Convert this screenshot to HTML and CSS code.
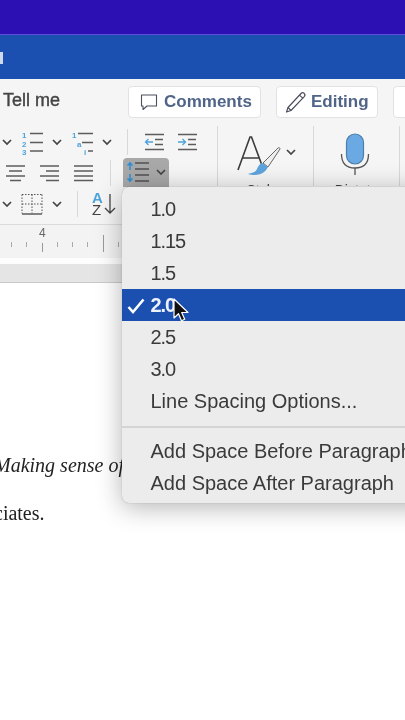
FILE: index.html
```html
<!DOCTYPE html>
<html lang="en">
<head>
<meta charset="utf-8">
<title>Line spacing menu</title>
<link rel="stylesheet" href="styles.css">
</head>
<body>
<div class="app">
  <div class="os-bar"></div>
  <div class="title-bar"><span class="title-stub"></span></div>
  <div class="ribbon">
    <div class="ribbon-head">
      <span class="tell">Tell me</span>
      <button class="pill pill-comments">
        <svg class="pill-icon" viewBox="0 0 20 20" width="20" height="20"><path d="M2.5 3h15v11H8l-4 3.5V14H2.5z" fill="#fff" stroke="#4a4f5c" stroke-width="1.1" stroke-linejoin="round"/></svg>
        <span>Comments</span>
      </button>
      <button class="pill pill-editing">
        <svg class="pill-icon" viewBox="0 0 24 24" width="24" height="24"><path d="M4 17.5 17 3.5c1-1 2.3-1 3.2-.1s.9 2.200 0 3.200L7 20.500l-4.500 1.500z" fill="none" stroke="#4a4f5c" stroke-width="1.200" stroke-linejoin="round"/><path d="M15.500 5.200l3.500 3.200M4 17.500l3 3" fill="none" stroke="#4a4f5c" stroke-width="1.100"/></svg>
        <span>Editing</span>
      </button>
      <button class="pill pill-next"></button>
    </div>
    <div class="tools">
      <div class="para">
        <div class="row row-1">
          <svg class="chev" viewBox="0 0 10 6" width="10" height="6"><path d="M1 1l4 4 4-4"/></svg>
          <svg class="ico" viewBox="0 0 22 24" width="22" height="24"><g class="num-text"><text x="2" y="8">1</text><text x="2" y="16.500">2</text><text x="2" y="25">3</text></g><path class="ln" d="M10 3.500h13M10 12.500h13M10 21h13"/></svg>
          <svg class="chev" viewBox="0 0 10 6" width="10" height="6"><path d="M1 1l4 4 4-4"/></svg>
          <svg class="ico" viewBox="0 0 22 24" width="22" height="24"><g class="num-text"><text x="1" y="8">1</text><text x="6" y="16.500">a</text><text x="13" y="25">i</text></g><path class="ln" d="M7 3.500h15M11 12.500h11M17 21h5"/></svg>
          <svg class="chev" viewBox="0 0 10 6" width="10" height="6"><path d="M1 1l4 4 4-4"/></svg>
          <span class="sep"></span>
          <svg class="ico" viewBox="0 0 20 18" width="20" height="18"><path class="ln" d="M1 1.500h19M11 6.500h8M11 11.500h8M1 16.500h19"/><path class="num" d="M9 9H1.500M4.500 6 1.500 9l3 3"/></svg>
          <svg class="ico" viewBox="0 0 20 18" width="20" height="18"><path class="ln" d="M1 1.500h19M11 6.500h8M11 11.500h8M1 16.500h19"/><path class="num" d="M1 9h7.500M5.500 6l3 3-3 3"/></svg>
        </div>
        <div class="row row-2">
          <svg class="ico" viewBox="0 0 20 18" width="20" height="18"><path class="ln" d="M1 2h19M4 7h13M1 12h19M5 16.500h11"/></svg>
          <svg class="ico" viewBox="0 0 20 18" width="20" height="18"><path class="ln" d="M1 2h19M7 7h13M1 12h19M7 16.500h13"/></svg>
          <svg class="ico" viewBox="0 0 20 18" width="20" height="18"><path class="ln" d="M1 2h19M1 7h19M1 12h19M1 16.500h19"/></svg>
          <span class="sep sep-2"></span>
          <div class="spacing-btn">
            <svg class="ico" viewBox="0 0 24 22" width="24" height="22"><path class="num num-strong" d="M4 9V2M1.500 4.500 4 2l2.500 2.500M4 13v7M1.500 17.500 4 20l2.500-2.500"/><path class="ln ln-dark" d="M9 2h14M9 8h14M9 14h14M9 20h14"/></svg>
            <svg class="chev" viewBox="0 0 10 6" width="10" height="6"><path d="M1 1l4 4 4-4"/></svg>
          </div>
        </div>
        <div class="row row-3">
          <svg class="chev" viewBox="0 0 10 6" width="10" height="6"><path d="M1 1l4 4 4-4"/></svg>
          <svg class="ico" viewBox="0 0 22 22" width="22" height="22"><path d="M1 1.500h20M1 11h20M11 1.500v19M1 1.500v19M21 1.500v19" fill="none" stroke="#555" stroke-width="1" stroke-dasharray="1.500 1.500"/><path class="ln" d="M1 21h20"/></svg>
          <svg class="chev" viewBox="0 0 10 6" width="10" height="6"><path d="M1 1l4 4 4-4"/></svg>
          <span class="sep sep-3"></span>
          <span class="sort"><span class="sort-a">A</span><span class="sort-z">Z</span></span>
          <svg class="sort-arrow" viewBox="0 0 12 22" width="12" height="22"><path d="M6 1v19M1 15l5 5 5-5" fill="none" stroke="#444" stroke-width="1.300"/></svg>
        </div>
      </div>
      <div class="big-tool tool-style">
        <div class="big-icons">
          <svg viewBox="0 0 46 46" width="46" height="46"><path d="M2 40 14 7h1.500L27 38M6.500 28h17" fill="none" stroke="#3c3c3c" stroke-width="1.600"/><path d="M27 33 42 18c1-1 2 0 2 1L32 37z" fill="#efefef" stroke="#666" stroke-width="1"/><path d="M26 33c-3 1-4 4-5 6-1 3-5 4-9 5 5 2 13 1 16-2 3-2 3-4 4-5z" fill="#5ea3dd"/></svg>
          <svg class="chev" viewBox="0 0 10 6" width="10" height="6"><path d="M1 1l4 4 4-4"/></svg>
        </div>
        <span class="big-label">Styles</span>
      </div>
      <div class="big-tool tool-dictate">
        <svg class="mic" viewBox="0 0 32 46" width="32" height="46"><rect x="7.500" y="4" width="17" height="30" rx="8.500" fill="#6aa9e4" stroke="#4b7ea8" stroke-width="1.200"/><path d="M2.500 24c0 10 5 14 13.500 14s13.500-4 13.500-14M16 38v7" fill="none" stroke="#555" stroke-width="1.300"/></svg>
        <span class="big-label">Dictate</span>
      </div>
    </div>
  </div>
  <div class="ruler">
    <span class="ruler-num">4</span>
    <div class="ticks"><i></i><i></i><i class="mid"></i><i></i><i></i><i></i><i class="tall"></i><i></i></div>
  </div>
  <div class="ruler-gap"></div>
  <div class="band"></div>
  <div class="doc">
    <p class="doc-line doc-italic">Making sense of</p>
    <p class="doc-line doc-plain">ciates.</p>
  </div>
</div>
<div class="menu">
  <div class="item item-num">1.0</div>
  <div class="item item-num">1.15</div>
  <div class="item item-num">1.5</div>
  <div class="item item-num active"><svg class="check" viewBox="0 0 18 16" width="18" height="16"><path d="M1.500 9l4.500 5L16.500 1.500" fill="none" stroke="#fff" stroke-width="2.600"/></svg>2.0</div>
  <div class="item item-num">2.5</div>
  <div class="item item-num">3.0</div>
  <div class="item">Line Spacing Options...</div>
  <div class="divider"></div>
  <div class="item">Add Space Before Paragraph</div>
  <div class="item">Add Space After Paragraph</div>
</div>
<svg class="cursor" viewBox="0 0 16 25" width="16" height="25"><path d="M1 1v19l4.500-4.300 3 7 3.200-1.400-3-6.800H15z" fill="#111" stroke="#fff" stroke-width="1.200" stroke-linejoin="round"/></svg>
</body>
</html>
```
FILE: styles.css
```css
* { box-sizing: border-box; }
html, body { margin: 0; padding: 0; width: 405px; height: 720px; overflow: hidden; background: #fff; }
body { position: relative; font-family: "Liberation Sans", Arial, sans-serif; filter: blur(0.4px); }

.app { width: 405px; height: 720px; display: flex; flex-direction: column; overflow: hidden; }
.os-bar { height: 35px; background: #2d10b4; border-bottom: 1px solid #5a4fd6; flex: none; }
.title-bar { height: 44px; background: #1b50b0; flex: none; display: flex; align-items: center; }
.title-stub { width: 3px; height: 12px; background: #cfd9ee; margin-top: 1px; }

.ribbon { height: 146px; background: #f5f5f5; flex: none; overflow: hidden; border-bottom: 1px solid #dcdcdc; }
.ribbon-head { height: 47px; display: flex; align-items: flex-start; padding-top: 7px; white-space: nowrap; }
.tell { font-size: 18px; color: #444; margin: 4px 0 0 3px; width: 125px; flex: none; -webkit-text-stroke: .4px #444; }
.pill { height: 32px; background: #fff; border: 1px solid #e2e2e2; border-radius: 4px; display: flex; align-items: center; padding: 0; font: 700 17px "Liberation Sans", Arial, sans-serif; color: #4f6488; flex: none; }
.pill-comments { width: 133px; padding-left: 10px; gap: 5px; }
.pill-editing { width: 102px; margin-left: 15px; padding-left: 7px; gap: 3px; }
.pill-next { width: 40px; margin-left: 15px; }
.pill-icon { flex: none; }

.tools { display: flex; height: 99px; }
.para { width: 218px; flex: none; border-right: 1px solid #d8d8d8; height: 60px; overflow: visible; }
.row { display: flex; align-items: center; width: 217px; padding-left: 2px; }
.row-1 { height: 31px; }
.row-2 { height: 31px; padding-left: 5px; }
.row-3 { height: 32px; }
.chev { flex: none; fill: none; stroke: #444; stroke-width: 1.700; }
.ico { flex: none; }
.ln { fill: none; stroke: #5c5c5c; stroke-width: 1.500; }
.ln-dark { stroke: #505050; }
.num { fill: none; stroke: #4ea3dc; stroke-width: 1.300; }
.num-strong { stroke: #2f8fd6; stroke-width: 1.600; }
.num-text { font: 700 8px "Liberation Sans", Arial, sans-serif; fill: #4ea3dc; }
.row-1 svg { overflow: visible; }
.row-1 .ico:nth-of-type(2) { margin-left: 8px; }
.row-1 .chev:nth-of-type(3) { margin-left: 10px; }
.row-1 .ico:nth-of-type(4) { margin-left: 9px; }
.row-1 .chev:nth-of-type(5) { margin-left: 9px; }
.sep { width: 1px; height: 26px; background: #d8d8d8; margin-left: 15px; flex: none; }
.row-1 .sep + svg { margin-left: 16px; }
.row-1 .sep + svg + svg { margin-left: 13px; }
.row-2 .ico:nth-of-type(2), .row-2 .ico:nth-of-type(3) { margin-left: 14px; }
.sep-2 { margin-left: 17px; }
.spacing-btn { width: 46px; height: 29px; margin-left: 12px; margin-top: -1px; background: #a8a8a8; border-radius: 4px 4px 0 0; display: flex; align-items: center; gap: 6px; padding-left: 3px; }
.row-3 .ico { margin-left: 9px; }
.row-3 .ico + .chev { margin-left: 9px; }
.sep-3 { margin-left: 15px; }
.sort { display: flex; flex-direction: column; margin-left: 14px; font-size: 15px; line-height: 12px; font-weight: 700; }
.sort-a { color: #4ea3dc; }
.sort-z { color: #444; font-weight: 400; }
.sort-arrow { margin-left: 1px; }

.big-tool { display: flex; flex-direction: column; align-items: center; height: 60px; flex: none; border-right: 1px solid #d8d8d8; overflow: hidden; }
.tool-style { width: 96px; padding-top: 4px; align-items: center; }
.tool-dictate { width: 86px; padding-top: 4px; }
.mic { margin-left: -3px; flex: none; }
.big-icons { display: flex; align-items: center; align-self: flex-start; padding-left: 18px; height: 46px; flex: none; }
.big-icons .chev { margin-top: -2px; margin-left: 4px; }
.big-label { font-size: 14px; color: #444; margin-top: 7px; line-height: 14px; flex: none; }

.ruler { height: 33px; background: #f3f3f3; flex: none; position: relative; }
.ruler-num { position: absolute; left: 39px; top: 1px; font-size: 12px; line-height: 14px; color: #666; }
.ticks { display: flex; gap: 14.3px; height: 18px; padding-top: 0; position: relative; top: 10px; align-items: flex-start; margin-left: 11px; }
.ticks i { display: block; width: 1px; height: 5px; margin-top: 7px; background: #aaa; flex: none; }
.ticks .mid { height: 9px; margin-top: 8px; background: #999; }
.ticks .tall { height: 17px; margin-top: 0; background: #999; }
.ruler-gap { height: 6px; background: #fdfdfd; flex: none; }
.band { height: 19px; background: #e5e5e5; border-bottom: 1px solid #c9c9c9; flex: none; }

.doc { flex: 1; background: #fff; font-family: "Liberation Serif", "Times New Roman", serif; font-size: 20px; color: #222; position: relative; }
.doc-line { margin: 0; white-space: nowrap; line-height: 24px; }
.doc-italic { font-style: italic; margin: 170px 0 0 -6px; }
.doc-plain { margin: 24px 0 0 -6px; }

.menu { position: absolute; left: 122px; top: 187px; width: 340px; height: 316px; padding-top: 6px; background: #ececec; border-radius: 7px; box-shadow: 0 4px 26px rgba(0,0,0,.3), 0 0 1px rgba(0,0,0,.35); }
.item { height: 32px; line-height: 32px; padding-left: 28.5px; font-size: 20px; color: #3a3a3a; white-space: nowrap; position: relative; }
.item-num { letter-spacing: -1.100px; }
.item.active { background: #1b4fb0; color: #eef2fb; font-weight: 700; }
.check { position: absolute; left: 5px; top: 9px; }
.divider { height: 2px; background: #d4d4d4; margin: 9px 0 7px; }
.cursor { position: absolute; left: 173px; top: 298px; }
```
